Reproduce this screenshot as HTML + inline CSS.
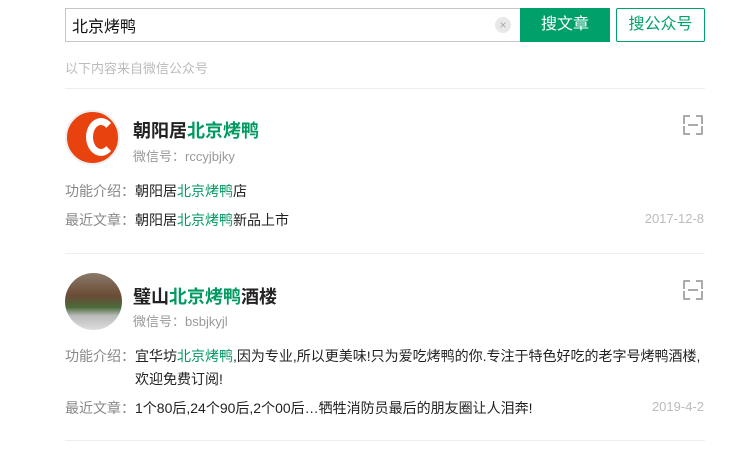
<!DOCTYPE html>
<html><head><meta charset="utf-8"><style>
*{margin:0;padding:0;box-sizing:border-box}
body{width:747px;height:456px;background:#fff;font-family:"Liberation Sans","Noto Sans CJK SC",sans-serif;position:relative;overflow:hidden;color:#222}
.a{position:absolute}
.g{color:#009a61}
.lbl{color:#888;display:inline-block;width:70px}
.row{font-size:14px;left:65px;white-space:nowrap;line-height:20px}
.sc{width:20px;height:20px;border:2px solid #aaa;border-radius:1px}
</style></head><body>
<div class="a" style="left:65px;top:8px;width:456px;height:34px;border:1px solid #c5c5c5;border-right:none"></div>
<div class="a" style="left:72px;top:13px;font-size:16px;color:#111">北京烤鸭</div>
<div class="a" style="left:495px;top:17px;width:16px;height:16px;border-radius:50%;background:#e8e8e8;color:#aaa;font-size:12px;text-align:center;line-height:16px">×</div>
<div class="a" style="left:520px;top:8px;width:90px;height:34px;background:#00a06a;color:#fff;font-size:16px;text-align:center;line-height:34px">搜文章</div>
<div class="a" style="left:616px;top:8px;width:89px;height:34px;border:1px solid #00a06a;border-radius:2px;color:#00a06a;font-size:16px;text-align:center;line-height:32px">搜公众号</div>
<div class="a" style="left:65px;top:58px;font-size:13px;color:#bbb">以下内容来自微信公众号</div>
<div class="a" style="left:65px;top:88px;width:640px;height:1px;background:#eee"></div>

<div class="a" style="left:65px;top:110px;width:55px;height:55px;border-radius:50%;background:#e8420e;border:2px solid #eee"></div>
<div class="a" style="left:86px;top:118px;width:30px;height:38px;border-radius:50%;border:7px solid #fff;border-right-color:transparent"></div>
<div class="a" style="left:133px;top:117px;font-size:18px;font-weight:bold">朝阳居<span class="g">北京烤鸭</span></div>
<div class="a" style="left:133px;top:146px;font-size:13px;color:#999">微信号：rccyjbjky</div>
<div class="a sc" style="left:683px;top:115px"><div style="position:absolute;left:-3px;top:7px;width:22px;height:2px;background:#fff"></div><div style="position:absolute;left:5px;top:-3px;width:6px;height:22px;background:#fff"></div><div style="position:absolute;left:3px;top:7px;width:10px;height:2px;background:#aaa"></div></div>
<div class="a row" style="top:181px"><span class="lbl">功能介绍：</span>朝阳居<span class="g">北京烤鸭</span>店</div>
<div class="a row" style="top:210px"><span class="lbl">最近文章：</span>朝阳居<span class="g">北京烤鸭</span>新品上市</div>
<div class="a" style="right:43px;top:211px;font-size:13px;color:#bbb">2017-12-8</div>
<div class="a" style="left:65px;top:253px;width:640px;height:1px;background:#eee"></div>

<div class="a" style="left:65px;top:273px;width:57px;height:57px;border-radius:50%;background:linear-gradient(#8a7a6a 0,#6b4b36 40%,#4a6a3a 60%,#bbb 75%,#ddd 100%)"></div>
<div class="a" style="left:133px;top:283px;font-size:18px;font-weight:bold">璧山<span class="g">北京烤鸭</span>酒楼</div>
<div class="a" style="left:133px;top:311px;font-size:13px;color:#999">微信号：bsbjkyjl</div>
<div class="a sc" style="left:683px;top:280px"><div style="position:absolute;left:-3px;top:7px;width:22px;height:2px;background:#fff"></div><div style="position:absolute;left:5px;top:-3px;width:6px;height:22px;background:#fff"></div><div style="position:absolute;left:3px;top:7px;width:10px;height:2px;background:#aaa"></div></div>
<div class="a row" style="top:346px"><span class="lbl">功能介绍：</span>宜华坊<span class="g">北京烤鸭</span>,因为专业,所以更美味!只为爱吃烤鸭的你.专注于特色好吃的老字号烤鸭酒楼,</div>
<div class="a row" style="top:369px;left:135px">欢迎免费订阅!</div>
<div class="a row" style="top:398px"><span class="lbl">最近文章：</span>1个80后,24个90后,2个00后…牺牲消防员最后的朋友圈让人泪奔!</div>
<div class="a" style="right:43px;top:399px;font-size:13px;color:#bbb">2019-4-2</div>
<div class="a" style="left:65px;top:440px;width:640px;height:1px;background:#eee"></div>
</body></html>
